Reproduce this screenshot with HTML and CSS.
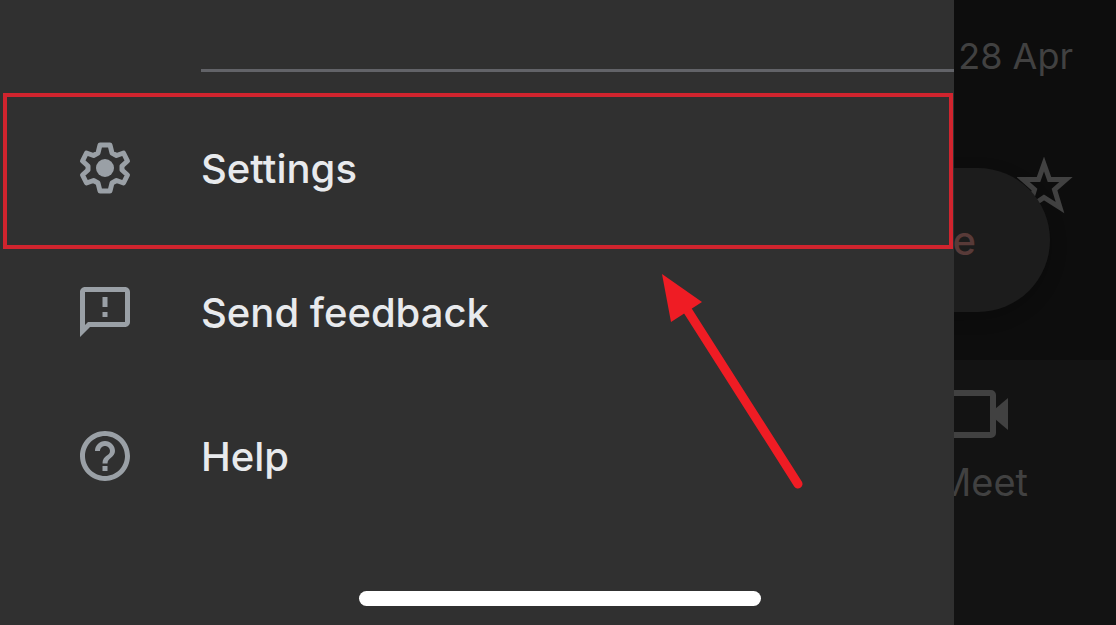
FILE: index.html
```html
<!DOCTYPE html>
<html lang="en">
<head>
<meta charset="utf-8">
<meta name="viewport" content="width=device-width, initial-scale=1">
<title>Mail menu</title>
<link rel="stylesheet" href="styles.css">
</head>
<body>
<div class="screen">
  <nav class="drawer" aria-label="Menu">
    <hr class="divider">
    <ul class="menu">
      <li class="menu-row highlighted">
        <a class="menu-link" href="#settings">
          <svg class="menu-icon" viewBox="0 0 60 60" aria-hidden="true">
            <path class="line" d="M25 7H35L37 15L41.500 17.500L48.500 15L52.500 23L47 28V32L52.500 37L48.500 45L41.500 42.500L37 45L35 53H25L23 45L18.500 42.500L11.500 45L7.500 37L13 32V28L7.500 23L11.500 15L18.500 17.500L23 15Z"/>
            <circle class="solid" cx="30" cy="30" r="9"/>
          </svg>
          <span>Settings</span>
        </a>
      </li>
      <li class="menu-row">
        <a class="menu-link" href="#feedback">
          <svg class="menu-icon" viewBox="0 0 24 24" aria-hidden="true">
            <path class="solid" d="M20 2H4c-1.100 0-2 .9-2 2v18l4-4h14c1.100 0 2-.9 2-2V4c0-1.100-.9-2-2-2zm0 14H5.200L4 17.200V4h16v12zM11 12h2v2h-2zM11 6h2v4h-2z"/>
          </svg>
          <span>Send feedback</span>
        </a>
      </li>
      <li class="menu-row">
        <a class="menu-link" href="#help">
          <svg class="menu-icon" viewBox="0 0 24 24" aria-hidden="true">
            <path class="solid" d="M11 18h2v-2h-2v2zm1-16C6.480 2 2 6.480 2 12s4.480 10 10 10 10-4.480 10-10S17.520 2 12 2zm0 18c-4.410 0-8-3.590-8-8s3.590-8 8-8 8 3.590 8 8-3.590 8-8 8zm0-14c-2.210 0-4 1.790-4 4h2c0-1.100.9-2 2-2s2 .9 2 2c0 2-3 1.750-3 5h2c0-2.250 3-2.500 3-5 0-2.210-1.790-4-4-4z"/>
          </svg>
          <span>Help</span>
        </a>
      </li>
    </ul>
  </nav>
  <main class="inbox">
    <section class="mail">
      <time class="date">28 Apr</time>
      <button class="star" type="button" aria-label="Star">
        <svg viewBox="0 0 56 58" aria-hidden="true"><path d="M27 7L32.500 22.500H49L37.500 32.500L43 50.500L27 40.500L12 50.500L17.500 32.500L6 22.500H21.500Z"/></svg>
      </button>
      <button class="compose" type="button">Compose</button>
    </section>
    <a class="meet" href="#meet">
      <svg class="meet-icon" viewBox="0 0 60 48" aria-hidden="true"><rect x="1" y="3" width="44" height="42" rx="2"/><path d="M47 19L60 8V40L47 29Z"/></svg>
      <span>Meet</span>
    </a>
  </main>
  <svg class="arrow" viewBox="0 0 144 218" aria-hidden="true"><path class="shaft" d="M26 36L138 212"/><path class="head" d="M2 2L42 30L11 50Z"/></svg>
  <div class="home-bar"></div>
</div>
</body>
</html>
```
FILE: styles.css
```css
* { box-sizing: border-box; }
body {
  margin: 0;
  background: #303030;
  color: #e8eaed;
  font-family: Inter, Roboto, sans-serif;
}
a { color: inherit; text-decoration: none; }
button { padding: 0; border: 0; background: none; font: inherit; }
svg { display: block; }
.screen {
  position: relative;
  display: grid;
  grid-template-columns: 1fr 162px;
  min-height: 100vh;
  overflow: hidden;
}
.drawer { padding-top: 69px; background: #303030; }
.divider {
  height: 3px;
  margin: 0 0 24px 201px;
  border: 0;
  background: #626368;
}
.menu { margin: 0; padding: 0; list-style: none; }
.menu-row { position: relative; }
.menu-link {
  display: flex;
  align-items: center;
  gap: 66px;
  height: 144px;
  padding-left: 75px;
  font-size: 40px;
  font-weight: 500;
}
.menu-icon { width: 60px; height: 60px; flex: none; }
.solid { fill: #9aa0a6; }
.line { fill: none; stroke: #9aa0a6; stroke-width: 5; stroke-linejoin: round; }
.highlighted::after {
  content: "";
  position: absolute;
  inset: -3px 1px -9px 3px;
  border: 4px solid #d0242e;
  pointer-events: none;
}
.inbox {
  display: flex;
  flex-direction: column;
  overflow: hidden;
  background: #131313;
}
.mail {
  display: flex;
  flex-direction: column;
  align-items: flex-end;
  height: 360px;
  padding: 32px 43px 0 0;
  background: #0d0d0d;
}
.date { color: #414141; font-size: 36px; line-height: 48px; white-space: nowrap; }
.star { width: 56px; height: 58px; margin-top: 77px; }
.star path { fill: none; stroke: #414141; stroke-width: 5; }
.compose {
  flex: none;
  position: relative;
  height: 144px;
  margin: -47px 23px 0 0;
  padding: 0 74px;
  border-radius: 72px;
  background: #1c1c1c;
  box-shadow: 0 6px 18px rgba(0, 0, 0, 0.2);
  color: #583a38;
  font-size: 40px;
  font-weight: 500;
}
.meet {
  display: flex;
  flex-direction: column;
  align-items: flex-end;
  gap: 20px;
  padding: 30px 88px 0 0;
  color: #414141;
  font-size: 38px;
  line-height: 48px;
}
.meet-icon { width: 60px; height: 48px; flex: none; margin-right: 20px; }
.meet-icon rect { fill: none; stroke: #414141; stroke-width: 6; }
.meet-icon path { fill: #414141; }
.arrow { position: absolute; left: 660px; top: 272px; width: 144px; height: 218px; }
.shaft { fill: none; stroke: #ef1c24; stroke-width: 9; stroke-linecap: round; }
.head { fill: #ef1c24; }
.home-bar {
  position: absolute;
  left: 359px;
  bottom: 19px;
  width: 402px;
  height: 15px;
  border-radius: 8px;
  background: #fff;
}
```
